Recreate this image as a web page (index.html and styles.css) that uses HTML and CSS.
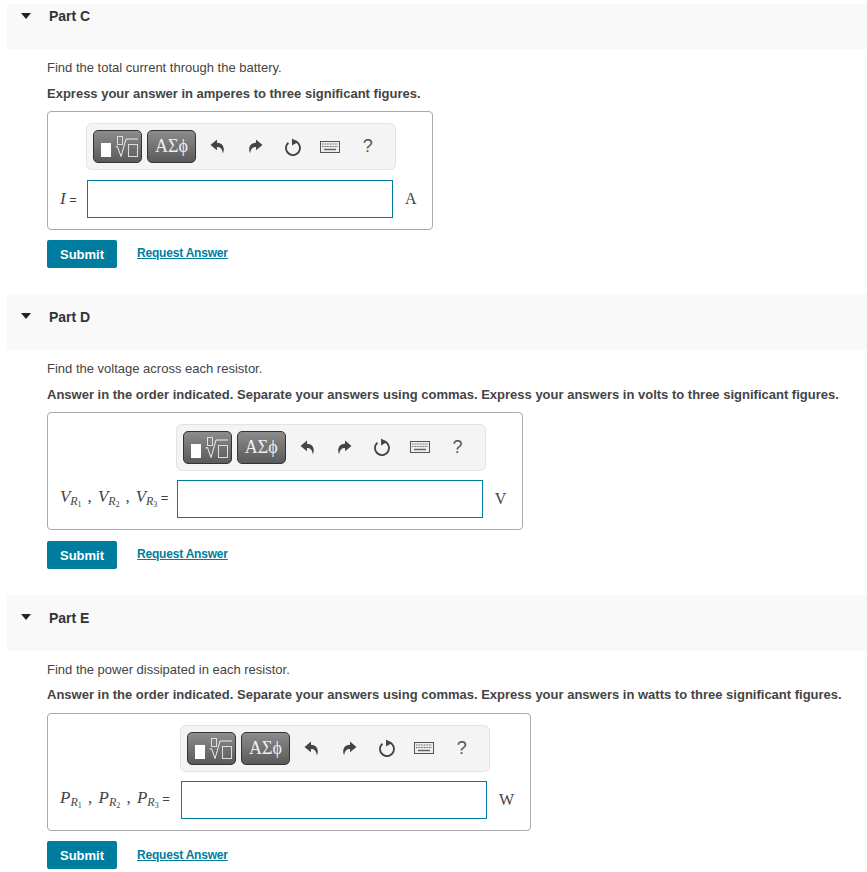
FILE: index.html
```html
<!DOCTYPE html>
<html lang="en">
<head>
  <meta charset="UTF-8" />
  <title>Parts C to E</title>
  <link rel="stylesheet" href="styles.css">
</head>
<body>
  <svg class="icon-defs" width="0" height="0">
    <symbol id="templates" viewBox="0 0 49 33">
      <rect x="8" y="13" width="10" height="14" fill="#fff"/>
      <rect x="24.5" y="6.5" width="5" height="8" fill="none" stroke="#ddd"/>
      <path d="M22.500 17 L24.500 16.500 L28 26.500 L33 9 H45" fill="none" stroke="#eee" stroke-width="1"/>
      <rect x="35.500" y="14.500" width="9" height="12" fill="none" stroke="#ddd"/>
    </symbol>
    <symbol id="undo" viewBox="0 0 14 14">
      <path d="M6.500 .5 L.5 5.500 L6.500 10.500 V7.500 C9.500 7.500 11.500 9 12 13.500 C14.500 8 11.500 3.500 6.500 3.500 Z" fill="#444"/>
    </symbol>
    <symbol id="redo" viewBox="0 0 14 14">
      <path d="M7.500 .5 L13.500 5.500 L7.500 10.500 V7.500 C4.500 7.500 2.500 9 2 13.500 C-.5 8 2.500 3.500 7.500 3.500 Z" fill="#444"/>
    </symbol>
    <symbol id="reset" viewBox="0 0 18 20">
      <path d="M4.400 5.700 A7 7 0 1 0 9 4" fill="none" stroke="#444" stroke-width="1.800"/>
      <path d="M8 1.500 L14 5 L8 8.500 Z" fill="#444"/>
    </symbol>
    <symbol id="keyboard" viewBox="0 0 20 12">
      <rect x=".5" y=".5" width="19" height="11" fill="#eee" stroke="#555"/>
      <path d="M2 3 H18 M2 5.500 H18" stroke="#666" stroke-width="1.200" stroke-dasharray="1 .6"/>
      <path d="M4 8.500 H16" stroke="#666" stroke-width="1.500"/>
    </symbol>
  </svg>

  <!-- Part C -->
  <section class="part part-first">
    <h2 class="part-head"><span class="caret"></span>Part C</h2>
    <div class="part-body">
      <p class="question">Find the total current through the battery.</p>
      <p class="instruction">Express your answer in amperes to three significant figures.</p>
      <div class="answer-box">
        <div class="toolbar">
          <span class="tool-btn"><svg class="templates-icon"><use href="#templates"/></svg></span>
          <span class="tool-btn greek">ΑΣϕ</span>
          <span class="tool"><svg class="ic-arrow"><use href="#undo"/></svg></span>
          <span class="tool"><svg class="ic-arrow"><use href="#redo"/></svg></span>
          <span class="tool"><svg class="ic-reset"><use href="#reset"/></svg></span>
          <span class="tool"><svg class="ic-keyboard"><use href="#keyboard"/></svg></span>
          <span class="tool help">?</span>
        </div>
        <label class="answer-label"><i>I</i><span class="eq"> =</span></label>
        <input class="answer-input" type="text">
        <span class="unit">A</span>
      </div>
      <div class="actions">
        <button class="submit">Submit</button>
        <a class="request" href="#">Request Answer</a>
      </div>
    </div>
  </section>

  <!-- Part D -->
  <section class="part">
    <h2 class="part-head"><span class="caret"></span>Part D</h2>
    <div class="part-body">
      <p class="question">Find the voltage across each resistor.</p>
      <p class="instruction">Answer in the order indicated. Separate your answers using commas. Express your answers in volts to three significant figures.</p>
      <div class="answer-box">
        <div class="toolbar">
          <span class="tool-btn"><svg class="templates-icon"><use href="#templates"/></svg></span>
          <span class="tool-btn greek">ΑΣϕ</span>
          <span class="tool"><svg class="ic-arrow"><use href="#undo"/></svg></span>
          <span class="tool"><svg class="ic-arrow"><use href="#redo"/></svg></span>
          <span class="tool"><svg class="ic-reset"><use href="#reset"/></svg></span>
          <span class="tool"><svg class="ic-keyboard"><use href="#keyboard"/></svg></span>
          <span class="tool help">?</span>
        </div>
        <label class="answer-label label-volts"><i>V</i><sub><i>R</i><sub>1</sub></sub> , <i>V</i><sub><i>R</i><sub>2</sub></sub> , <i>V</i><sub><i>R</i><sub>3</sub></sub><span class="eq"> =</span></label>
        <input class="answer-input" type="text">
        <span class="unit">V</span>
      </div>
      <div class="actions">
        <button class="submit">Submit</button>
        <a class="request" href="#">Request Answer</a>
      </div>
    </div>
  </section>

  <!-- Part E -->
  <section class="part">
    <h2 class="part-head"><span class="caret"></span>Part E</h2>
    <div class="part-body">
      <p class="question">Find the power dissipated in each resistor.</p>
      <p class="instruction">Answer in the order indicated. Separate your answers using commas. Express your answers in watts to three significant figures.</p>
      <div class="answer-box">
        <div class="toolbar">
          <span class="tool-btn"><svg class="templates-icon"><use href="#templates"/></svg></span>
          <span class="tool-btn greek">ΑΣϕ</span>
          <span class="tool"><svg class="ic-arrow"><use href="#undo"/></svg></span>
          <span class="tool"><svg class="ic-arrow"><use href="#redo"/></svg></span>
          <span class="tool"><svg class="ic-reset"><use href="#reset"/></svg></span>
          <span class="tool"><svg class="ic-keyboard"><use href="#keyboard"/></svg></span>
          <span class="tool help">?</span>
        </div>
        <label class="answer-label label-watts"><i>P</i><sub><i>R</i><sub>1</sub></sub> , <i>P</i><sub><i>R</i><sub>2</sub></sub> , <i>P</i><sub><i>R</i><sub>3</sub></sub><span class="eq"> =</span></label>
        <input class="answer-input" type="text">
        <span class="unit">W</span>
      </div>
      <div class="actions">
        <button class="submit">Submit</button>
        <a class="request" href="#">Request Answer</a>
      </div>
    </div>
  </section>
</body>
</html>
```

FILE: styles.css
```css
body {
  margin: 0;
  padding-top: 4px;
  font-family: "Liberation Sans", Arial, sans-serif;
  color: #444;
  background-color: #fff;
}

.icon-defs {
  position: absolute;
}

.part {
  margin-left: 7px;
  margin-bottom: 26.2px;
}

.part-head {
  display: flex;
  align-items: center;
  height: 55.8px;
  margin: 0;
  padding: 0 0 10px 42px;
  box-sizing: border-box;
  position: relative;
  background-color: #f9f9f9;
  font-size: 14px;
  font-weight: bold;
  color: #333;
}

.part-first .part-head {
  height: 45px;
  padding-bottom: 21px;
}

.caret {
  position: absolute;
  left: 14px;
  top: 19px;
  border-left: 5.5px solid transparent;
  border-right: 5.5px solid transparent;
  border-top: 6px solid #222;
}

.part-first .caret {
  top: 9px;
}

.part-body {
  padding: 11px 0 0 40px;
}

.question {
  margin: 0;
  height: 15px;
  line-height: 15px;
  font-size: 13px;
}

.instruction {
  margin: 10.75px 0 0;
  height: 15px;
  line-height: 15px;
  font-size: 13px;
  font-weight: bold;
}

.answer-box {
  display: inline-grid;
  grid-template-columns: auto 306px auto;
  align-items: center;
  margin-top: 10.25px;
  padding: 11px 16px 11px 12px;
  border: 1px solid #aaa;
  border-radius: 4px;
  vertical-align: top;
}

.toolbar {
  grid-column: 2 / 4;
  display: flex;
  align-items: center;
  width: 310px;
  height: 47px;
  box-sizing: border-box;
  margin-left: -1px;
  margin-bottom: 9.5px;
  padding-left: 6px;
  background-color: #f4f4f4;
  border: 1px solid #e3e3e3;
  border-radius: 6px;
}

.tool-btn {
  display: flex;
  align-items: center;
  justify-content: center;
  width: 49px;
  height: 33px;
  box-sizing: border-box;
  margin-right: 5px;
  background: linear-gradient(#8c8c8c, #5a5a5a);
  border: 1px solid #333;
  border-radius: 5px;
}

.templates-icon {
  width: 49px;
  height: 33px;
  flex: none;
}

.greek {
  margin-right: 0;
  font-family: "Liberation Serif", serif;
  font-size: 18px;
  color: #eee;
}

.tool {
  display: flex;
  align-items: center;
  justify-content: center;
  width: 37.5px;
  height: 33px;
}

.greek + .tool {
  margin-left: 3px;
}

.ic-arrow {
  width: 15px;
  height: 15px;
}

.ic-reset {
  width: 18px;
  height: 20px;
}

.ic-keyboard {
  width: 20px;
  height: 12px;
}

.help {
  font-size: 18px;
  color: #555;
}

.answer-label {
  padding-right: 10px;
  font-family: "Liberation Serif", serif;
  font-size: 17px;
  white-space: nowrap;
  word-spacing: 2px;
}

.label-volts {
  padding-right: 8.5px;
  padding-bottom: 4px;
  letter-spacing: -0.1px;
}

.label-watts {
  padding-right: 11px;
  padding-bottom: 5px;
}

.answer-label sub {
  font-size: 12px;
  line-height: 0;
  vertical-align: -3px;
}

.answer-label sub sub {
  font-size: 8px;
  vertical-align: -2px;
}

.eq {
  font-family: "Liberation Sans", sans-serif;
  font-size: 13px;
  word-spacing: 0;
}

.answer-input {
  width: 306px;
  height: 38px;
  box-sizing: border-box;
  border: 1px solid #007c9e;
  outline: none;
  background-color: #fff;
}

.unit {
  padding-left: 12px;
  font-family: "Liberation Serif", serif;
  font-size: 16px;
  text-align: center;
}

.actions {
  display: flex;
  align-items: center;
  margin-top: 10.3px;
  height: 28px;
}

.submit {
  width: 70px;
  height: 28px;
  padding: 1px 0 0;
  background-color: #007c9e;
  border: none;
  border-radius: 2px;
  font-family: inherit;
  font-size: 13px;
  font-weight: bold;
  color: #fff;
}

.request {
  margin-left: 20px;
  margin-top: -1.4px;
  font-size: 12px;
  font-weight: bold;
  letter-spacing: -0.2px;
  color: #007c9e;
}
```
